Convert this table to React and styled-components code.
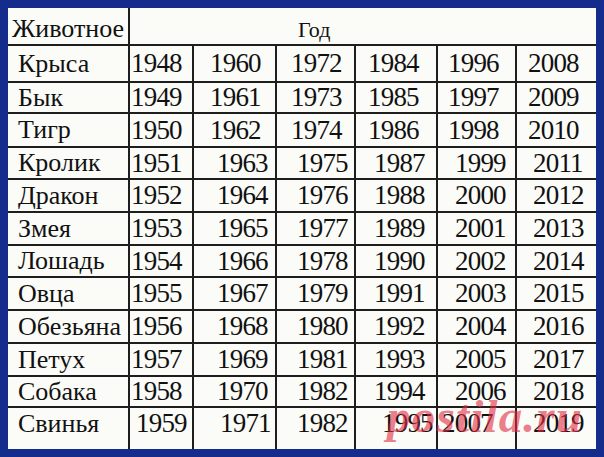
import React from "react";
import styled, { createGlobalStyle } from "styled-components";

const Global = createGlobalStyle`
  html, body { margin: 0; padding: 0; background: #142c8c; }
  #root { width: 604px; height: 457px; }
`;

const Frame = styled.div`
  position: relative;
  width: 604px;
  height: 457px;
  box-sizing: border-box;
  padding: 8px;
  background: #142c8c;
  font-family: "Liberation Serif", "Times New Roman", serif;
  color: #111;
`;

const Table = styled.div`
  display: grid;
  grid-template-columns: 120px 62px 81px 77px 80px 77px 79px;
  grid-template-rows: 36px 35px 29px 32px 30px 31px 31px 30px 31px 31px 31px 29px 41px;
  gap: 2px;
  background: #1e1e1e;
  width: 588px;
  height: 441px;
`;

const Cell = styled.div`
  background: #fbfbf8;
  display: flex;
  align-items: center;
  box-sizing: border-box;
  font-size: 26px;
  line-height: 1;
  white-space: nowrap;
  overflow: hidden;
`;

const HeaderCell = styled(Cell)`
  padding-left: 4px;
  padding-top: 6px;
`;

const GroupHeader = styled(Cell)`
  grid-column: span 6;
  font-size: 22px;
  padding-left: 168px;
  padding-top: 7px;
`;

const NameCell = styled(Cell)`
  padding-left: 10px;
  padding-bottom: ${(p) => p.$lift}px;
`;

const YearCell = styled(Cell)`
  font-size: 27px;
  letter-spacing: -0.8px;
  padding-left: ${(p) => p.$pad}px;
  padding-bottom: ${(p) => p.$lift}px;
`;

const Watermark = styled.div`
  position: absolute;
  left: 387px;
  top: 393px;
  font-family: "Liberation Serif", "Times New Roman", serif;
  font-style: italic;
  font-weight: bold;
  font-size: 47px;
  line-height: 1;
  letter-spacing: 1.2px;
  color: rgba(225, 45, 65, 0.62);
  pointer-events: none;
  white-space: nowrap;
`;

const rows = [
  ["Крыса", [1948, 1960, 1972, 1984, 1996, 2008]],
  ["Бык", [1949, 1961, 1973, 1985, 1997, 2009]],
  ["Тигр", [1950, 1962, 1974, 1986, 1998, 2010]],
  ["Кролик", [1951, 1963, 1975, 1987, 1999, 2011]],
  ["Дракон", [1952, 1964, 1976, 1988, 2000, 2012]],
  ["Змея", [1953, 1965, 1977, 1989, 2001, 2013]],
  ["Лошадь", [1954, 1966, 1978, 1990, 2002, 2014]],
  ["Овца", [1955, 1967, 1979, 1991, 2003, 2015]],
  ["Обезьяна", [1956, 1968, 1980, 1992, 2004, 2016]],
  ["Петух", [1957, 1969, 1981, 1993, 2005, 2017]],
  ["Собака", [1958, 1970, 1982, 1994, 2006, 2018]],
  ["Свинья", [1959, 1971, 1982, 1995, 2007, 2019]],
];

const offsetsTop = [1, 16, 14, 12, 10, 11];
const offsetsMid = [1, 23, 20, 18, 17, 16];
const offsetsLast = [6, 26, 20, 26, 4, 16];

function offsetsFor(i) {
  if (i < 3) return offsetsTop;
  if (i === rows.length - 1) return offsetsLast;
  return offsetsMid;
}

export default function App() {
  return (
    <>
      <Global />
      <Frame>
        <Table>
          <HeaderCell>Животное</HeaderCell>
          <GroupHeader>Год</GroupHeader>
          {rows.map(([name, years], i) => {
            const offs = offsetsFor(i);
            const lift = i === rows.length - 1 ? 10 : 0;
            return (
              <React.Fragment key={name}>
                <NameCell $lift={lift}>{name}</NameCell>
                {years.map((y, j) => (
                  <YearCell key={j} $pad={offs[j]} $lift={lift}>
                    {y}
                  </YearCell>
                ))}
              </React.Fragment>
            );
          })}
        </Table>
        <Watermark>postila.ru</Watermark>
      </Frame>
    </>
  );
}
